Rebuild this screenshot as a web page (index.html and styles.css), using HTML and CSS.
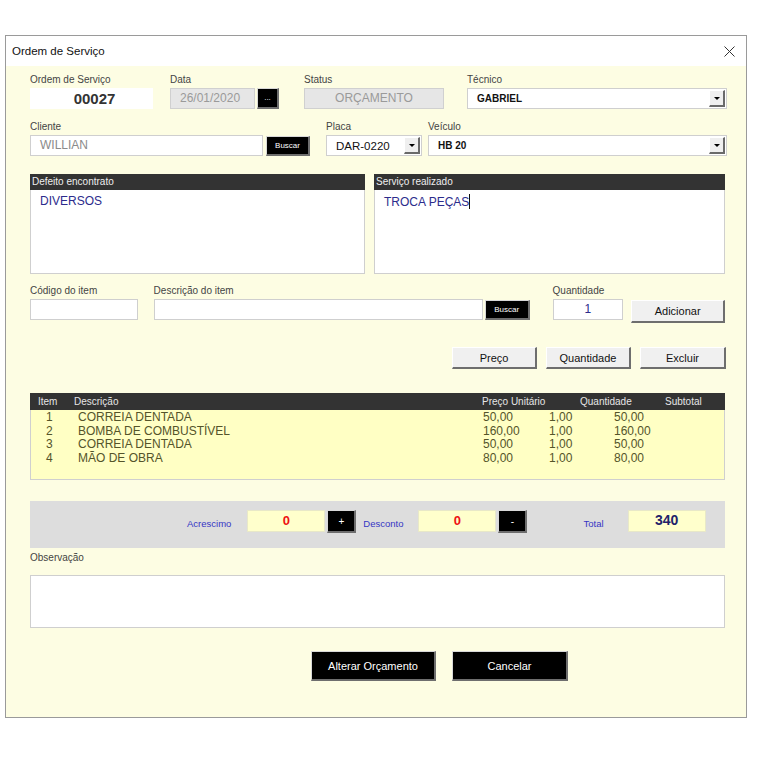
FILE: index.html
```html
<!DOCTYPE html>
<html lang="pt-BR">
<head>
  <meta charset="UTF-8" />
  <title>Ordem de Serviço</title>
  <link rel="stylesheet" href="styles.css">
</head>
<body>

<div class="window">
  <div class="titlebar">
    <span>Ordem de Serviço</span>
    <svg class="close" width="11" height="11" viewBox="0 0 11 11">
      <path d="M0.5 0.5 L10.5 10.5 M10.5 0.5 L0.5 10.5" stroke="#333" stroke-width="1" fill="none" />
    </svg>
  </div>

  <div class="content">

    <!-- linha 1 -->
    <div class="row r1">
      <div class="field f-os">
        <div class="label">Ordem de Serviço</div>
        <div class="os-num">00027</div>
      </div>
      <div class="field f-data">
        <div class="label">Data</div>
        <div class="with-btn">
          <div class="input disabled w-data">26/01/2020</div>
          <button class="btn-black btn-dots">...</button>
        </div>
      </div>
      <div class="field f-status">
        <div class="label">Status</div>
        <div class="input disabled center">ORÇAMENTO</div>
      </div>
      <div class="field f-tec">
        <div class="label">Técnico</div>
        <div class="select"><span class="val bold">GABRIEL</span><span class="arrow"></span></div>
      </div>
    </div>

    <!-- linha 2 -->
    <div class="row r2">
      <div class="field f-cli">
        <div class="label">Cliente</div>
        <div class="with-btn">
          <div class="input muted w-cli">WILLIAN</div>
          <button class="btn-black btn-buscar">Buscar</button>
        </div>
      </div>
      <div class="field f-placa">
        <div class="label">Placa</div>
        <div class="select"><span class="val">DAR-0220</span><span class="arrow"></span></div>
      </div>
      <div class="field f-vei">
        <div class="label">Veículo</div>
        <div class="select"><span class="val bold">HB 20</span><span class="arrow"></span></div>
      </div>
    </div>

    <!-- textos -->
    <div class="row r3">
      <div class="memo">
        <div class="memo-head">Defeito encontrato</div>
        <div class="memo-body">DIVERSOS</div>
      </div>
      <div class="memo">
        <div class="memo-head">Serviço realizado</div>
        <div class="memo-body">TROCA PEÇAS<span class="caret"></span></div>
      </div>
    </div>

    <!-- item -->
    <div class="row r4">
      <div class="field f-cod">
        <div class="label">Código do item</div>
        <div class="input"></div>
      </div>
      <div class="field f-desc">
        <div class="label">Descrição do item</div>
        <div class="with-btn">
          <div class="input w-desc"></div>
          <button class="btn-black btn-buscar2">Buscar</button>
        </div>
      </div>
      <div class="field f-qtd">
        <div class="label">Quantidade</div>
        <div class="input center blue">1</div>
      </div>
      <button class="btn-gray btn-add">Adicionar</button>
    </div>

    <div class="row r5">
      <button class="btn-gray b-preco">Preço</button>
      <button class="btn-gray b-qtd">Quantidade</button>
      <button class="btn-gray b-exc">Excluir</button>
    </div>

    <!-- itens -->
    <div class="grid-box">
      <div class="grid-head">
        <span>Item</span><span>Descrição</span><span>Preço Unitário</span><span>Quantidade</span><span>Subtotal</span>
      </div>
      <div class="grid-body">
        <div class="grid-row"><span>1</span><span>CORREIA DENTADA</span><span>50,00</span><span>1,00</span><span>50,00</span></div>
        <div class="grid-row"><span>2</span><span>BOMBA DE COMBUSTÍVEL</span><span>160,00</span><span>1,00</span><span>160,00</span></div>
        <div class="grid-row"><span>3</span><span>CORREIA DENTADA</span><span>50,00</span><span>1,00</span><span>50,00</span></div>
        <div class="grid-row"><span>4</span><span>MÃO DE OBRA</span><span>80,00</span><span>1,00</span><span>80,00</span></div>
      </div>
    </div>

    <!-- totais -->
    <div class="totals">
      <span class="t-label l-acr">Acrescimo</span>
      <div class="t-input t-acr red">0</div>
      <button class="btn-black t-btn">+</button>
      <span class="t-label l-desc">Desconto</span>
      <div class="t-input t-desc red">0</div>
      <button class="btn-black t-btn">-</button>
      <span class="t-label l-total">Total</span>
      <div class="t-input t-total navy">340</div>
    </div>

    <div class="label obs-label">Observação</div>
    <div class="obs"></div>

    <div class="row actions">
      <button class="btn-black big b-alt">Alterar Orçamento</button>
      <button class="btn-black big b-cancel">Cancelar</button>
    </div>

  </div>
</div>

</body>
</html>
```

FILE: styles.css
```css
* { box-sizing: border-box; }
body {
  margin: 0;
  background: #fff;
  font-family: "Liberation Sans", Arial, sans-serif;
  color: #333;
}

.window {
  margin: 35px 0 0 5px;
  width: 742px;
  height: 683px;
  border: 1px solid #9a9a9a;
  background: #fdfde3;
}

.titlebar {
  height: 30px;
  background: #fff;
  display: flex;
  align-items: center;
  justify-content: space-between;
  padding: 0 11px 0 6px;
  font-size: 11.5px;
  color: #111;
}

.content { padding: 7px 21px 0 24px; }

.row { display: flex; }
.field { display: flex; flex-direction: column; }
.label {
  font-size: 10px;
  line-height: 13px;
  height: 13px;
  margin-bottom: 2px;
  color: #444;
  white-space: nowrap;
}

.input {
  height: 21px;
  background: #fff;
  border: 1px solid #cfcfcf;
  font-size: 12px;
  line-height: 19px;
  padding: 0 9px;
  color: #222;
}
.input.disabled { background: #e6e6e6; color: #9a9a9a; border-color: #d0d0d0; }
.input.muted { color: #8a8a8a; }
.input.center { text-align: center; padding: 0; }
.input.blue { color: #2c2c8c; }

.with-btn { display: flex; align-items: flex-start; }

.select {
  height: 21px;
  background: #fff;
  border: 1px solid #cfcfcf;
  display: flex;
  align-items: center;
  padding: 1px 1px 1px 9px;
  font-size: 11.5px;
  color: #111;
}
.select .val { flex: 1; }
.select .bold { font-weight: bold; font-size: 10px; }
.select .arrow {
  width: 16px;
  height: 17px;
  background: #efefef;
  border-top: 1px solid #fff;
  border-left: 1px solid #fff;
  border-right: 2px solid #6a6a6a;
  border-bottom: 2px solid #6a6a6a;
  position: relative;
}
.select .arrow::after {
  content: "";
  position: absolute;
  left: 4px;
  top: 6px;
  border-left: 3px solid transparent;
  border-right: 3px solid transparent;
  border-top: 3px solid #000;
}

button {
  font-family: "Liberation Sans", Arial, sans-serif;
  cursor: pointer;
  padding: 0;
}
.btn-black {
  background: #000;
  color: #fff;
  border-top: 1px solid #d8d8d8;
  border-left: 1px solid #d8d8d8;
  border-right: 2px solid #6e6e6e;
  border-bottom: 2px solid #6e6e6e;
  font-size: 8px;
}
.btn-gray {
  background: #f0f0f0;
  color: #111;
  border-top: 1px solid #fff;
  border-left: 1px solid #fff;
  border-right: 2px solid #6e6e6e;
  border-bottom: 2px solid #6e6e6e;
  font-size: 11px;
  height: 23px;
}

/* linha 1 */
.r1 { height: 36px; }
.f-os { width: 123px; }
.os-num {
  height: 21px;
  background: #fff;
  text-align: center;
  font-weight: bold;
  font-size: 15px;
  line-height: 21px;
  color: #333;
  padding-left: 6px;
}
.f-data { margin-left: 17px; }
.w-data { width: 85px; }
.btn-dots { width: 22px; height: 21px; margin-left: 2px; line-height: 10px; }
.f-status { margin-left: 25px; width: 140px; }
.f-tec { margin-left: 23px; flex: 1; margin-right: -2px; }

/* linha 2 */
.r2 { margin-top: 11px; }
.f-cli { width: 280px; }
.w-cli { width: 233px; }
.btn-buscar { width: 44px; height: 20px; margin-left: 3px; margin-top: 1px; }
.f-placa { margin-left: 16px; width: 96px; }
.f-vei { margin-left: 6px; flex: 1; margin-right: -2px; }

/* memos */
.r3 { margin-top: 18px; gap: 9px; }
.memo {
  background: #fff;
  border: 1px solid #cfcfcf;
  height: 100px;
}
.memo:first-child { width: 335px; }
.memo:last-child { flex: 1; }
.memo-head {
  background: #333;
  color: #eee;
  font-size: 10px;
  height: 16px;
  line-height: 16px;
  padding-left: 2px;
  margin: -1px -1px 0;
}
.memo-body {
  padding: 4px 9px;
  font-size: 12px;
  color: #2c2c8c;
}
.caret {
  display: inline-block;
  width: 1px;
  height: 15px;
  background: #111;
  vertical-align: -3px;
}

/* item */
.r4 { margin-top: 10px; align-items: flex-start; }
.f-cod { width: 108px; }
.f-desc { margin-left: 16px; }
.w-desc { width: 329px; }
.btn-buscar2 { width: 45px; height: 20px; margin-left: 2px; margin-top: 1px; }
.f-qtd { margin-left: 23px; width: 71px; }
.btn-add { margin-left: 8px; margin-top: 16px; width: 94px; }

.r5 { margin-top: 24px; justify-content: flex-end; gap: 9px; margin-right: -1px; }
.r5 .btn-gray { height: 22px; }
.b-preco { width: 85px; }
.b-qtd { width: 85px; }
.b-exc { width: 86px; }

/* grade de itens */
.grid-box { margin-top: 24px; border: 1px solid #cfcfcf; }
.grid-head {
  background: #333;
  color: #e6e6e6;
  font-size: 10px;
  height: 17px;
  line-height: 17px;
  display: grid;
  grid-template-columns: 36px 408px 98px 85px 1fr;
  padding-left: 8px;
  margin: -1px -1px 0;
}
.grid-body {
  background: #ffffc4;
  height: 69px;
  padding-top: 1px;
}
.grid-row {
  display: grid;
  grid-template-columns: 32px 405px 66px 65px 1fr;
  padding-left: 15px;
  font-size: 12px;
  line-height: 13.5px;
  color: #54542a;
}

/* totais */
.totals {
  margin-top: 21px;
  height: 47px;
  background: #dddddd;
  display: flex;
  align-items: flex-start;
  padding-top: 9px;
}
.t-label {
  font-size: 9.5px;
  color: #3535c4;
  line-height: 22px;
  padding-top: 3px;
}
.l-acr { margin-left: 157px; }
.t-input {
  height: 22px;
  background: #ffffcc;
  border: 1px solid #e8e8c8;
  text-align: center;
  font-weight: bold;
  font-size: 13px;
  line-height: 19px;
}
.t-input.red { color: #ee1111; }
.t-input.navy { color: #22226a; font-size: 14px; }
.t-acr { margin-left: 16px; width: 78px; }
.t-btn { width: 29px; height: 23px; margin-left: 2px; font-size: 10px; }
.l-desc { margin-left: 7px; }
.t-desc { margin-left: 15px; width: 78px; }
.l-total { margin-left: 56px; }
.t-total { margin-left: 24px; width: 78px; }

.obs-label { margin-top: 3px; margin-bottom: 11px; }
.obs {
  height: 53px;
  background: #fff;
  border: 1px solid #cfcfcf;
}

.actions { margin-top: 23px; justify-content: flex-start; }
.btn-black.big { height: 30px; font-size: 11px; }
.b-alt { margin-left: 281px; width: 125px; }
.b-cancel { margin-left: 16px; width: 116px; }
```
